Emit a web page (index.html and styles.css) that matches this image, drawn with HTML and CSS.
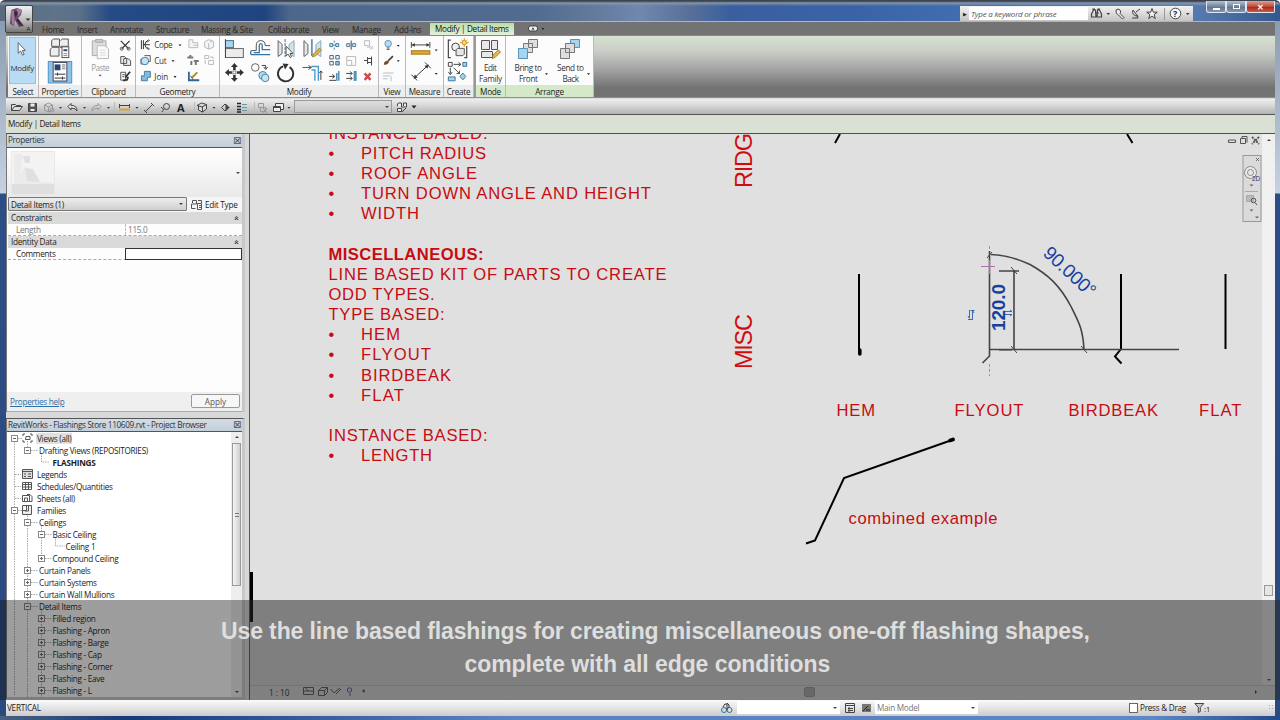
FILE: index.html
```
<!DOCTYPE html>
<html lang="en">
<head>
<meta charset="utf-8">
<title>Flashings Store</title>
<link rel="stylesheet" href="styles.css">
</head>
<body>
<div class="window">
  <header class="titlebar">
    <div class="search">
      <span class="search-arrow">▶</span>
      <span class="search-box">Type a keyword or phrase</span>
      <svg class="search-icons" width="104" height="14" viewBox="1089 7 104 14" fill="none" stroke="#444" stroke-width="1">
        <path d="M1092.500 17v-3l2-4h2l.5 7zM1098 17l.5-7h2l2 4v3zM1096 13h4M1094 10v-1h2M1099 10v-1h2" stroke-width="1.200"/>
        <path d="M1107.500 13h3.500l-1.800 2z" fill="#333" stroke="none"/>
        <path d="M1117 10q2-2 4 0q1.500 2 0 3.500l4 4-1.500 1.500-4-4q-3-.5-2.500-5z" fill="#eee"/>
        <path d="M1134 10q-2 5 5 6.500M1134 10l5 6.500M1137 12l4-3M1133 18h6l-1-3"/>
        <path d="M1153 8.500l1.300 3.700h4l-3.200 2.400 1.200 4-3.300-2.400-3.300 2.400 1.200-4-3.200-2.400h4z" fill="#f3f3f3"/>
        <path d="M1165.500 8v12" stroke="#999"/>
        <circle cx="1176.500" cy="13.500" r="5.300" fill="#f5f8ff"/>
        <text x="1174" y="17" font-size="9" font-weight="700" fill="#234" stroke="none">?</text>
        <path d="M1187 13h3.500l-1.800 2z" fill="#333" stroke="none"/>
      </svg>
    </div>
    <div class="winbtns">
      <span class="wb wb-min"><i></i></span><span class="wb wb-max"><i></i></span><span class="wb wb-close">✕</span>
    </div>
  </header>
  <div class="appbutton">
    <svg width="28" height="27" viewBox="0 0 28 27">
      <path d="M5 4l6-2 5 2-1 5-3 3 6 8-5 1-4-7-1 6-4-2z" fill="#6a4766"/>
      <path d="M5 4l3 1 1 15-3-2zM11 2l5 2-3 6-3-2z" fill="#9c7d9b"/><path d="M8 6l3-1 1 3-3 3zM12 13l5 7-3-1-4-5z" fill="#3d2340"/>
      <path d="M19.500 12.500h5L22 15z" fill="#333"/><text x="20.500" y="25" font-size="6" fill="#111">A</text>
    </svg>
  </div>
  <nav class="tabs">
    <span class="tab t-home">Home</span><span class="tab t-insert">Insert</span><span class="tab t-annotate">Annotate</span><span class="tab t-structure">Structure</span><span class="tab t-massing">Massing &amp; Site</span><span class="tab t-collab">Collaborate</span><span class="tab t-view">View</span><span class="tab t-manage">Manage</span><span class="tab t-addins">Add-Ins</span><span class="tab active">Modify | Detail Items</span>
    <svg class="tab-toggle" width="18" height="10" viewBox="0 0 18 10"><rect x=".5" y="2" width="9" height="5" rx="2" fill="#eee" stroke="#444"/><path d="M3.500 5.500h3L5 3.500zM13.500 4h3L15 6z" fill="#222"/></svg>
  </nav>

  <section class="ribbon">
    <div class="panel p-select">
      <svg viewBox="8 36 31 49" class="tools">
        <rect x="9.500" y="36.500" width="27" height="48" fill="#b9dbf3" stroke="#8dbbdc"/>
        <path d="M18.500 42v11l2.500-2.300 2 4.300 1.700-.8-1.900-4.100h3.200z" fill="#fff" stroke="#555" stroke-width=".9"/>
        <text x="10.500" y="71" textLength="24.500">Modify</text>
      </svg><label>Select</label>
    </div>
    <div class="panel p-props">
      <svg viewBox="39 36 43 49" class="tools" fill="none" stroke="#555">
        <path d="M52 40l2-1.500h6V46h-8zM61 40l2-1.500h6V46h-8M50.500 49l2-2h7v9h-9zM60 47h3" fill="#eee"/>
        <rect x="62.500" y="46.500" width="7" height="11" fill="#fff"/><path d="M64 49h4v2h-4z" fill="#346" stroke="none"/><path d="M64 53.500h4M64 55.500h4" stroke-width=".7"/>
        <rect x="48.500" y="61.500" width="24" height="22" fill="#8fc3ea" stroke="#4f8fc2"/>
        <rect x="53.500" y="62.500" width="14" height="19" fill="#fff" stroke="#445"/>
        <path d="M55 64.500h6v6h-6z" fill="#27466f" stroke="none"/><path d="M62.500 65h3.500M62.500 67h3.500M62.500 69h3.500" stroke-width=".8"/><path d="M55 74.500h11M55 78.500h11M58 73v3M63 77v3" stroke="#333"/>
      </svg><label>Properties</label>
    </div>
    <div class="panel p-clip">
      <svg viewBox="82 36 54 49" class="tools" fill="none" stroke="#555">
        <path d="M92.500 40.500h14v15h-14z" fill="#ddd" stroke="#aaa"/><path d="M96 39h7v3h-7z" fill="#ccc" stroke="#aaa"/><path d="M97.500 45.500h8l3.500 3v10h-11.500z" fill="#fafafa" stroke="#bbb"/><path d="M100 50h6M100 52.500h6M100 55h6" stroke="#ccc" stroke-width=".7"/>
        <text x="91.500" y="71" textLength="18.500" fill="#999" stroke="none">Paste</text><path d="M99 75h3l-1.500 1.800z" fill="#444" stroke="none"/>
        <path d="M121.500 40.500l8 8M130.500 40.500l-8 8" stroke="#333" stroke-width="1.200"/><circle cx="122.500" cy="48.500" r="1.500"/><circle cx="129.500" cy="48.500" r="1.500"/>
        <path d="M121.500 56.500h4l2 2v5h-6zM124.500 58.500h4l3 2v5h-7z" fill="#eee"/>
        <path d="M121.500 72.500h5v8h-5zM123 75h3M123 77h2" fill="#fff"/><path d="M126 78l5-6M124 81l4-1 1-3" stroke="#333" stroke-width="1.800"/>
      </svg><label>Clipboard</label>
    </div>
    <div class="panel p-geom">
      <svg viewBox="136 36 84 49" class="tools" fill="none" stroke="#666">
        <path d="M141.500 40v9M144 44.500h6M149 39.500q-4 2-4 5t4 5M143.500 40v9" stroke="#333"/><path d="M147 42l3-2M147 47l3 2"/>
        <text x="154.500" y="48" textLength="18.500" class="ink">Cope</text><path d="M179 44.300h3l-1.500 1.800z" class="car"/>
        <path d="M144.500 55.500h6v6h-3" fill="#eee"/><path d="M141 59h5v5h-5z" fill="#fff"/><circle cx="145" cy="61" r="3.800" fill="#c7e2f3" stroke="#4d7da0"/>
        <text x="154.500" y="64" textLength="12.500" class="ink">Cut</text><path d="M172 60.300h3l-1.500 1.800z" class="car"/>
        <path d="M144.500 71.500h6v6h-3v3.500h-6v-5h3z" fill="#83bce2" stroke="#4d7da0"/>
        <text x="154.500" y="80" textLength="14" class="ink">Join</text><path d="M174 76.300h3l-1.500 1.800z" class="car"/>
        <path d="M189.500 39.500h4v3h5v5h-9zM194 45h4M205.500 41.500l4-2 5 1.500v6l-5 2-4-2zM209.500 43v6M212 39.500v3" stroke="#bbb" fill="#f5f5f5"/>
        <path d="M188 57.500h6M194.500 61h5M191 57v-2M196.500 60v5M192 61v4" stroke="#777" stroke-width="2"/>
        <path d="M205.500 55.500h4v3h-4zM209.500 60.500h5v4h-5zM211 57h3v2M206 60v4" stroke="#bbb"/>
        <path d="M189.500 72v8.500H200" stroke="#2d6494" stroke-width="1.800"/><path d="M192.500 78l5.500-5.500" stroke="#b08a2c" stroke-width="2"/><path d="M191 76l3 4" stroke="#555"/>
      </svg><label>Geometry</label>
    </div>
    <div class="panel p-modify">
      <svg viewBox="220 36 159 49" class="tools" fill="none" stroke="#666">
        <rect x="225.500" y="40.500" width="8" height="7" fill="#a9d4ee" stroke="#39739c"/><rect x="225.500" y="48.500" width="18" height="9" fill="#ececec"/><path d="M225.500 39v19" stroke="#444"/>
        <path d="M251.500 50.500h5v-5q0-5 4.500-5t4.500 5h5" stroke="#555"/><path d="M251.500 50.500q-1.500 2 0 4h19M254 52.500h5.500v-7q0-2 1.500-2t1.500 2v4h8" stroke="#37749f" stroke-width="1.300"/>
        <path d="M278.500 40.500l4 4v9l-4 3z" fill="#e5e5e5"/><path d="M285.500 39v18" stroke="#2b6ba0" stroke-dasharray="3 1"/><path d="M294.500 40.500l-5 4v9l5 3z" fill="#cfe6e8" stroke="#8ab"/><path d="M286.500 46v10l2-2 2 3.500 1.500-.7-1.600-3.400h3z" fill="#fff" stroke="#444" stroke-width=".9"/>
        <path d="M304.500 40.500l4 4v9l-4 3z" fill="#e5e5e5"/><path d="M312.500 39v17" stroke="#2b6ba0" stroke-width="1.300"/><path d="M321.500 40.500l-5 4v9l5 3z" fill="#cfe6e8" stroke="#8ab"/><path d="M313 57l1-3 6-6 2 2-6 6z" fill="#e5b53a" stroke="#8b6a22" stroke-width=".7"/>
        <path d="M234.500 63l3.500 4h-2.200v3h-2.600v-3H231zM234.500 82l3.500-4h-2.200v-3h-2.600v3H231zM225 72.500l4-3.500v2.200h3v2.600h-3V76zM244 72.500l-4-3.500v2.200h-3v2.600h3V76z" fill="#333" stroke="none"/><rect x="233" y="71" width="3" height="3" fill="#fff" stroke="#555" stroke-width=".7"/>
        <circle cx="255.500" cy="67.500" r="3.800" fill="#fafafa"/><path d="M262 65.500h4v3M264 67l2 2.500 2-2.500" stroke="#444"/><circle cx="263" cy="75.500" r="4" fill="#b5d9ed" stroke="#4f85a8"/><circle cx="265.500" cy="78" r="3.800" fill="#c5e3f2" stroke="#4f85a8"/>
        <path d="M283.500 66.500a7.700 7.700 0 1 0 6.500.7" stroke="#333" stroke-width="1.900"/><path d="M283 63.500l6 .5-3.500 5.500z" fill="#333" stroke="none"/>
        <path d="M303 67.500h9M309 65.500l3 2-3 2" stroke="#555"/><path d="M312 66.500h7V81M312 70h3.500v11" stroke="#4a9bd0" stroke-width="1.400"/><path d="M321.500 71v9M320 73l1.500-2 1.500 2" stroke="#444"/>
        <path d="M330.500 43.500h3v3h-3zM336.500 43.500h3v3h-3zM333.500 45h3" stroke="#3f7ca6" fill="#cfe6f4"/><path d="M335 40.500v2M335 47.500v2" stroke="#3f7ca6"/>
        <path d="M347.500 43.500h3v3h-3zM353.500 43.500h3v3h-3z" fill="#cfe6f4" stroke="#55809c"/><path d="M352 40.500v9" stroke="#444"/>
        <path d="M365.500 40.500h5v5h-5zM368 47h3M371 46l3 3.500M374 46l-3 3.500" stroke="#bbb"/>
        <path d="M330.500 55.500h3.500v3.500h-3.500zM336.500 55.500h3.500v3.500h-3.500zM330.500 61.500h3.500v3.500h-3.500z" fill="#fafafa" stroke="#406c8e"/><path d="M336.500 61.500h3.500v3.500h-3.500z" fill="#9cccea" stroke="#406c8e"/>
        <path d="M347.500 56.500h9v9h-9zM347.500 60.500h5v5" stroke="#bbb"/>
        <path d="M365 60.500h3M368.500 57v7M368.500 58.500h4v4h-4M372.500 56.500v9" stroke="#444"/>
        <path d="M330 76.500h5M333 74.500l2.500 2-2.500 2M330 80.500h7" stroke="#444"/><path d="M339.500 71v10M337.500 73v8" stroke="#5591b8" stroke-width="1.600"/>
        <path d="M347 73.500h6M347 78.500h6M351 71.500l2 2-2 2M351 76.500l2 2-2 2" stroke="#444"/><path d="M356 71v10" stroke="#5591b8" stroke-width="3"/>
        <path d="M365.500 73.500l6 6.500M371.500 73.500l-6 6.500" stroke="#d2484b" stroke-width="2.500"/>
      </svg><label>Modify</label>
    </div>
    <div class="panel p-view">
      <svg viewBox="379 36 27 49" class="tools" fill="none" stroke="#555">
        <circle cx="388.500" cy="43" r="3.400" fill="#b5dcf4" stroke="#6a94b5"/><path d="M387 47.500h3M387 49h3" stroke="#555"/><path d="M397.500 44.300h3l-1.500 1.800z" class="car"/>
        <path d="M393.500 56l-5 5" stroke="#444" stroke-width="1.800"/><path d="M384 65q0-4 4-4.500l1.500 1.500q-1.500 3-5.500 3z" fill="#7b4b24" stroke="none"/><path d="M397.500 60.300h3l-1.500 1.800z" class="car"/>
        <path d="M383 73.500h11M383 76.500h8M383 79.500h5M391.500 77v5" stroke="#bbb"/>
      </svg><label>View</label>
    </div>
    <div class="panel p-measure">
      <svg viewBox="406 36 38 49" class="tools" fill="none" stroke="#333">
        <path d="M411.500 41.500v6M430.500 41.500v6M412 44.500h18" stroke="#444"/><path d="M412 44.500l3-2v4zM430 44.500l-3-2v4z" fill="#333" stroke="none"/><rect x="411.500" y="50.500" width="19" height="3.500" fill="#e5a92a" stroke="#9d7520"/><path d="M435.500 49.300h3l-1.500 1.800z" class="car"/>
        <path d="M414 79l15-14M411.500 75l6 6M425.500 62.500l6 6"/><path d="M414 79l1-4 3 3zM429 65l-4 1 3 3z" fill="#333" stroke="none"/><path d="M435.500 73.300h3l-1.500 1.800z" class="car"/>
      </svg><label>Measure</label>
    </div>
    <div class="panel p-create">
      <svg viewBox="444 36 30 49" class="tools" fill="none" stroke="#444">
        <path d="M451 39.500h-2.500v18h2.500M465 57.500h2.500v-12" stroke-width="1.200"/><circle cx="456" cy="46.500" r="4" fill="#eee"/><path d="M456.500 49.500l1.500-1.500h7v6l-1.500 1.500h-7z" fill="#e5e5e5" stroke="#555"/><circle cx="465" cy="42" r="2.300" fill="#ffd768" stroke="#d78b1b"/><path d="M465 37.500v2M465 44.500v2M460.500 42h2M467.500 42h2M462 39l1 1M468 39l-1 1" stroke="#d78b1b"/>
        <path d="M448.500 62.500h4v4h-4z" fill="#fafafa"/><path d="M463.500 62.500h4v4h-4zM448.500 77.500h7v4h-7zM463.500 73.500l3 3.500-3 3.500-3-3.500z" fill="#a6d3ee" stroke="#39739c"/><path d="M454 64.500h7M459 62.500l2.500 2-2.500 2M450.500 68v7M448.500 72.500l2 2.500 2-2.500M454 68l6 6M460 71v3h-3"/>
      </svg><label>Create</label>
    </div>
    <div class="panel p-mode">
      <svg viewBox="476 36 29 49" class="tools" fill="none" stroke="#555">
        <path d="M481.500 40.500h8v9h-8zM481.500 51.500h11v6h-11zM491.500 40.500h6v9h-6z" fill="#e8e8e8"/><path d="M492 58.500l1-3.500 5.500-5 2 2-5.500 5.500z" fill="#e8bd45" stroke="#846822" stroke-width=".8"/>
        <text x="484" y="71" textLength="13" class="ink">Edit</text><text x="479" y="81.500" textLength="23" class="ink">Family</text>
      </svg><label class="green">Mode</label>
    </div>
    <div class="panel p-arrange">
      <svg viewBox="506 36 87 49" class="tools" fill="none" stroke="#777">
        <path d="M528.500 39.500h9v8h-9zM523.500 43.500h9v9h-9z" fill="#dedede"/><path d="M518.500 48.500h9v10h-9z" fill="#a5d5ef" stroke="#5793b8"/>
        <text x="514.500" y="71" textLength="27.500" class="ink">Bring to</text><text x="519" y="81.500" textLength="19" class="ink">Front</text><path d="M545 73.300h3l-1.500 1.800z" class="car"/>
        <path d="M570.500 39.500h9v8h-9z" fill="#a5d5ef" stroke="#5793b8"/><path d="M565.500 43.500h9v9h-9zM560.500 48.500h9v10h-9z" fill="#dedede"/>
        <text x="557" y="71" textLength="27" class="ink">Send to</text><text x="562.500" y="81.500" textLength="16.500" class="ink">Back</text><path d="M587 73.300h3l-1.500 1.800z" class="car"/>
      </svg><label class="green">Arrange</label>
    </div>
  </section>

  <div class="qat">
    <svg width="290" height="16" viewBox="6 98 290 16" fill="none" stroke="#444">
      <path d="M11.500 109.500v-6h4l1 1h4v1M11.500 109.500l3-4h8l-3 4z" fill="#ddd"/>
      <path d="M28.500 102.500h8v8h-8z" fill="#555"/><path d="M30.500 102.500h4v3h-4zM30.500 108h4v2h-4z" fill="#eee" stroke="none"/>
      <path d="M44.500 104l4-2 4 2v5l-4 2-4-2zM44.500 104l4 2 4-2M48.500 106v5" stroke="#999"/><circle cx="52" cy="109" r="2" stroke="#999"/>
      <path d="M68 105.500l3-3v2q6-.5 6 5.500-1-3-6-3v2z" fill="#e8e8e8"/><path d="M101 105.500l-3-3v2q-6-.5-6 5.500 1-3 6-3v2z" stroke="#999"/>
      <path d="M119.500 103v4M129.500 103v4M120 104.500h9" /><path d="M119 107.500h11v2h-11z" fill="#d9a42b" stroke="none"/>
      <path d="M145 111l8-8M144 109l3 3M151 102l3 3"/><circle cx="166.500" cy="105.500" r="3"/><path d="M164 108l-2 3M161 106l2 2"/>
      <text x="177" y="111" font-size="11" font-weight="700" fill="#222" stroke="none">A</text>
      <path d="M197 104.500l4.500-2.500 5 1.500v4.500l-4 3-4-2v-4.500M197 104.500l5 1.500 4.500-2.500M202.500 106v5" fill="#ddd"/><path d="M221.500 106.500l3.500-3.500 3.500 3.500-3.500 3.500z"/><path d="M226 103.500l3 3-3 3z" fill="#444"/>
      <path d="M237 102.500h4M237 105.500h4M237 108.500h4M237 111h4" stroke="#222" stroke-width="1.500"/><path d="M242 103.500h5M242 106.500h5M242 109.500h5" stroke="#69a"/>
      <path d="M258.500 102.500h5v4h-5zM260.500 106.500h5v4h-5zM263 107l4 5M267 107l-4 5" stroke="#999"/>
      <path d="M275.500 102.500h8v6h-8z" fill="#eee"/><path d="M273.500 105.500h7v5h-7zM273.500 106.500h7" fill="#eee"/>
      <path d="M59 106h3l-1.500 1.800zM83 106h3l-1.500 1.800zM107 106h3l-1.500 1.800zM135.500 106h3l-1.500 1.800zM212.500 106h3l-1.500 1.800zM287.500 106h3l-1.500 1.800z" fill="#333" stroke="none"/>
      <path d="M114.500 101v11M194.500 101v11M254.500 101v11" stroke="#bbb"/>
    </svg>
    <span class="qat-combo"><b class="down"></b></span>
    <svg width="30" height="16" viewBox="394 98 30 16" fill="none" stroke="#444"><path d="M397.500 105v-2l1-1h3v4h5v-4h-3v3M397.500 107.500h4v3h-4zM402 111l4-4" fill="#eee"/><path d="M411.500 104.500h5l-2.500 3z" fill="#222" stroke="none"/></svg>
  </div>
  <div class="optbar">Modify | Detail Items</div>

  <main class="work">
    <aside class="side">
      <section class="props">
        <h2><span>Properties</span><i class="x">⊠</i></h2>
        <div class="preview"><svg width="44" height="44" viewBox="0 0 44 44"><rect x=".5" y=".5" width="43" height="43" fill="#f3f3f3" stroke="#e9e9e9"/><path d="M3 3h9l-3 20 6-8 10 16h18v12H1V33h2z" fill="#ebebeb"/><path d="M1 33h42v10H1z" fill="#dfdfdf"/><path d="M12 5h7v7h-5zM14 17l8 1 7 13-13-1z" fill="#e0e0e0"/></svg><b class="down"></b></div>
        <div class="typerow"><span class="select">Detail Items (1)<b class="down"></b></span>
          <svg width="12" height="11" viewBox="0 0 12 11" fill="none" stroke="#555"><path d="M1.500 4V1.500h4V5h-5v4.500h4M7 1.500h3.500V4"/><path d="M6.500 4.500h4v6h-4zM8 6.500h2M8 8.500h2" fill="#fff"/></svg>
          <span class="edit">Edit Type</span></div>
        <div class="grp"><span>Constraints</span><i>«</i></div>
        <div class="prow dim"><span>Length</span><em>115.0</em></div>
        <div class="grp"><span>Identity Data</span><i>«</i></div>
        <div class="prow"><span>Comments</span><em class="boxed"></em></div>
        <div class="pfoot"><a>Properties help</a><button>Apply</button></div>
      </section>
      <section class="browser">
        <h2><span>RevitWorks - Flashings Store 110609.rvt - Project Browser</span><i class="x">⊠</i></h2>
        <div class="treewrap">
          <div class="tree">
            <svg class="guides" width="60" height="265" viewBox="8 433 60 265" fill="none" stroke="#aaa" stroke-dasharray="1.500 1"><path d="M14.500 442v255M27.500 514v184M27.500 442v7M41.500 454v9h8M41.500 526v32M55.500 538v9h9M41.500 610v88M18 439.500h4M31 451.500h7M15 475.500h6M15 487.500h6M15 499.500h6M18 511.500h4M31 523.500h7M45 535.500h7M45 559.500h7M31 571.500h7M31 583.500h7M31 595.500h7M31 607.500h7M45 619.500h7M45 631.500h7M45 643.500h7M45 655.500h7M45 667.500h7M45 679.500h7M45 691.500h7"/></svg>
            <div class="row l1"><u class="minus"></u><svg width="11" height="10" viewBox="0 0 11 10" fill="none" stroke="#555"><path d="M1 3V1h2M8 1h2v2M10 7v2H8M3 9H1V7M4 3.500h4v3H3.500z"/></svg><span class="sel">Views (all)</span></div>
            <div class="row l2"><u class="minus"></u><span>Drafting Views (REPOSITORIES)</span></div>
            <div class="row leaf3"><span class="bold">FLASHINGS</span></div>
            <div class="row l1"><u class="none"></u><svg width="11" height="10" viewBox="0 0 11 10" fill="#ddd" stroke="#555"><path d="M.5.500h10v9H.5zM.5 2.500h10M2 5h2M6 5h3M2 7.500h2M6 7.500h3"/></svg><span>Legends</span></div>
            <div class="row l1"><u class="none"></u><svg width="11" height="10" viewBox="0 0 11 10" fill="#fff" stroke="#555"><path d="M.5 1.500h9v7H.5zM.5 3.500h9M.5 6h9M3.500 1.500v7M6.500 1.500v7"/></svg><span>Schedules/Quantities</span></div>
            <div class="row l1"><u class="none"></u><svg width="11" height="10" viewBox="0 0 11 10" fill="#fff" stroke="#555"><path d="M.5 2.500h7v6H.5zM2.500 8V5h3v3M5 1.500h3l2 2v5H7.500"/></svg><span>Sheets (all)</span></div>
            <div class="row l1"><u class="minus"></u><svg width="11" height="10" viewBox="0 0 11 10" fill="#eee" stroke="#555"><path d="M.5.500h9v9H.5zM.5 5.500h4v-5M6.500 1v5H3"/></svg><span>Families</span></div>
            <div class="row l2"><u class="minus"></u><span>Ceilings</span></div>
            <div class="row l3"><u class="minus"></u><span>Basic Ceiling</span></div>
            <div class="row leaf4"><span>Ceiling 1</span></div>
            <div class="row l3"><u class="plus"></u><span>Compound Ceiling</span></div>
            <div class="row l2"><u class="plus"></u><span>Curtain Panels</span></div>
            <div class="row l2"><u class="plus"></u><span>Curtain Systems</span></div>
            <div class="row l2"><u class="plus"></u><span>Curtain Wall Mullions</span></div>
            <div class="row l2"><u class="minus"></u><span>Detail Items</span></div>
            <div class="row l3"><u class="plus"></u><span>Filled region</span></div>
            <div class="row l3"><u class="plus"></u><span>Flashing - Apron</span></div>
            <div class="row l3"><u class="plus"></u><span>Flashing - Barge</span></div>
            <div class="row l3"><u class="plus"></u><span>Flashing - Cap</span></div>
            <div class="row l3"><u class="plus"></u><span>Flashing - Corner</span></div>
            <div class="row l3"><u class="plus"></u><span>Flashing - Eave</span></div>
            <div class="row l3"><u class="plus"></u><span>Flashing - L</span></div>
          </div>
          <div class="vscroll"><b class="up"></b><div class="thumb"><i></i></div><b class="down"></b></div>
        </div>
      </section>
    </aside>

    <section class="canvas">
      <svg class="drawing" width="1012" height="551" viewBox="250 134 1012 551">
        <g class="note">
          <text x="328.500" y="139" textLength="159">INSTANCE BASED:</text>
          <text x="328.500" y="158.500">•</text><text x="361" y="158.500" textLength="125">PITCH RADIUS</text>
          <text x="328.500" y="178.500">•</text><text x="361" y="178.500" textLength="116">ROOF ANGLE</text>
          <text x="328.500" y="198.500">•</text><text x="361" y="198.500" textLength="290">TURN DOWN ANGLE AND HEIGHT</text>
          <text x="328.500" y="219">•</text><text x="361" y="219" textLength="58">WIDTH</text>
          <text x="328.500" y="259.500" textLength="155" font-weight="700">MISCELLANEOUS:</text>
          <text x="328.500" y="279.500" textLength="338">LINE BASED KIT OF PARTS TO CREATE</text>
          <text x="328.500" y="299.500" textLength="106">ODD TYPES.</text>
          <text x="328.500" y="319.500" textLength="116">TYPE BASED:</text>
          <text x="328.500" y="340">•</text><text x="361" y="340" textLength="39">HEM</text>
          <text x="328.500" y="360">•</text><text x="361" y="360" textLength="70">FLYOUT</text>
          <text x="328.500" y="380.500">•</text><text x="361" y="380.500" textLength="90">BIRDBEAK</text>
          <text x="328.500" y="400.500">•</text><text x="361" y="400.500" textLength="43">FLAT</text>
          <text x="328.500" y="440.500" textLength="159">INSTANCE BASED:</text>
          <text x="328.500" y="461">•</text><text x="361" y="461" textLength="71">LENGTH</text>
          <text x="836.500" y="416" textLength="38.500">HEM</text>
          <text x="954.500" y="416" textLength="69">FLYOUT</text>
          <text x="1068.500" y="416" textLength="89.500">BIRDBEAK</text>
          <text x="1199" y="416" textLength="42.500">FLAT</text>
          <text x="848.500" y="524" textLength="149">combined example</text>
          <text class="big" transform="translate(751.500 188) rotate(-90)" textLength="55">RIDG</text>
          <text class="big" transform="translate(751.500 369) rotate(-90)" textLength="55">MISC</text>
        </g>
        <g fill="none" stroke="#000" stroke-width="2">
          <path d="M840 134l-5 9M1127 134l5.500 9M859 274v76M1121 274v75l-6 7.500 6.500 7M1225.500 274v75M806 543.500l9-3 29-62.500 108-38"/>
          <path d="M859.800 350v4" stroke-width="3.600" stroke-linecap="round"/><path d="M950 440.500l3-1" stroke-width="3.800" stroke-linecap="round"/><path d="M251.500 572v50" stroke-width="3"/>
        </g>
        <g fill="none" stroke="#444" stroke-width="1.600">
          <path d="M989.500 251v105l-7 7M989.500 349.500H1179M1014 270v79M999 271h20M991 254.500c14 .5 26 4 39 10 18 10 30 21 41 42 8 16 12 23 13 43"/>
          <path d="M987 258l5-6M1011 267l6 7M1011 346l6 7M1081 346l6 7M999 350h13" stroke-width="1"/>
          <path d="M989.500 246v4M989.500 364v12" stroke="#999" stroke-width="1" stroke-dasharray="3 2"/><path d="M981 266.500h14M989.500 260v14" stroke="#b06cb0" stroke-width="1"/>
          <path d="M969.500 310v8M968 316l1.500 2.500M972.500 320v-9M974 313l-1.500-2.500M968 319.500h4M970.500 310.500h4M1004 311.500h8l-2-1.500M1005 314.500h7l-2 1.500" stroke="#2a5eb0" stroke-width=".9"/>
        </g>
        <text class="dim-b" transform="translate(1005 331) rotate(-90)" textLength="47">120.0</text>
        <text class="dim-a" transform="translate(1042 254.500) rotate(43)" textLength="64">90.000°</text>
        <g fill="none" stroke="#555">
          <path d="M1228.500 140h7v2.500h-7z"/><path d="M1240.500 138.500h5v5h-5zM1242 138v-1.500h5v6"/><path d="M1252 137l7 7M1259 137l-7 7" stroke-width="2" stroke-dasharray="2 1"/>
          <rect x="1243" y="155.500" width="18" height="66" fill="#dadada" stroke="#999"/><path d="M1256 158l3 3M1259 158l-3 3" stroke-width=".8"/>
          <circle cx="1250.500" cy="172.500" r="6" fill="#e8e8e8" stroke="#888"/><circle cx="1250.500" cy="172.500" r="3" stroke="#888"/><path d="M1245 191.500h13" stroke="#aaa"/>
          <path d="M1246.500 195.500h7v6h-7z" fill="#b9bbb4" stroke="#aaa"/><circle cx="1253.500" cy="200.500" r="2.300"/><path d="M1255 202.500l2 2.500"/>
          <path d="M1249.500 184.500h4l-2 2zM1249.500 209.500h4l-2 2zM1255 216.500h4l-2 2z" fill="#666" stroke="none"/>
        </g>
        <text x="1252" y="181" font-size="6.500" fill="#336">2D</text>
      </svg>
      <div class="cscroll"><b class="up"></b><div class="cthumb"></div><b class="down"></b></div>
      <div class="viewbar"><span>1 : 10</span>
        <svg width="70" height="12" viewBox="300 686 70 12" fill="none" stroke="#555"><path d="M303.500 687.500h10v7h-10zM304 691h9M306 688l2 3"/><path d="M318.500 690.500h6v5h-6zM318.500 690.500l3-3h6v5l-3 3M324.500 690.500l3-3"/><path d="M331 689q3 6 5 2l4-3M336 694l5-5"/><circle cx="349.500" cy="690" r="2.200" stroke="#3d5ea5"/><path d="M350 693v3" stroke="#3d5ea5"/><path d="M364.500 689l-2.500 2 2.500 2z" fill="#333" stroke="none"/></svg>
        <i class="hthumb"></i><b class="right"></b>
      </div>
    </section>
    <div class="caption"><p class="c1">Use the line based flashings for creating miscellaneous one-off flashing shapes,</p><p class="c2">complete with all edge conditions</p></div>
  </main>

  <footer class="status">
    <span class="st-msg">VERTICAL</span>
    <svg width="14" height="12" viewBox="0 0 14 12" fill="none" stroke="#35718f"><circle cx="4" cy="8" r="2.500" fill="#bfe6f5"/><circle cx="9.500" cy="8" r="2.500"/><path d="M3 5l2-3h2v6M9 6V3l-2-2" stroke="#333"/></svg>
    <span class="st-combo"><b class="down"></b></span>
    <svg width="28" height="12" viewBox="0 0 28 12" fill="none" stroke="#444"><path d="M1.500 1.500h9v9h-9zM1.500 3.500h9M4 6.500h5M4 8.500h5M5 5v5"/><path d="M18 2h9v8h-9z" fill="#777" stroke="none"/><path d="M19 9l5-5M22 8h4" stroke="#222"/></svg>
    <span class="st-combo st-model">Main Model<b class="down"></b></span>
    <span class="st-check"></span><span class="st-pd">Press &amp; Drag</span>
    <svg width="18" height="12" viewBox="0 0 18 12" fill="none" stroke="#444"><path d="M.8 1.500h9l-3.500 4v4l-2 1v-5z" fill="#ccc"/><text x="10" y="10" font-size="7.500" fill="#222" stroke="none">:1</text></svg>
    <i class="grip"></i>
  </footer>
</div>
</body>
</html>
```
FILE: styles.css
```
* { box-sizing: border-box; }
body { margin: 0; width: 1280px; height: 720px; overflow: hidden; font-family: "Open Sans", "Noto Sans", sans-serif; font-size: 8.2px; letter-spacing: -.27px; color: #222; }
h2, p { margin: 0; font-weight: 400; }
i, em, u { font-style: normal; text-decoration: none; }
svg { display: block; flex: none; letter-spacing: 0; }
.window { position: relative; display: flex; flex-direction: column; width: 1280px; height: 720px; padding: 0 5px 4px 6px; border-top: 1px solid #3b4450; border-radius: 5px 5px 0 0;
  background:
    linear-gradient(#3a3f46, #8397ac 2px, transparent 5px) 0 0 / 100% 21px no-repeat,
    linear-gradient(90deg, #5a6b80, #5f7389 55px, #5a7089 80px, #264a84 110px, #20447f 265px, #4d678b 290px, #526c90 540px, #62799a 590px, #7088ae 640px, #587098 690px, #3a5f9f 730px, #3a63a7 850px, #4670b4 1000px, #5579af 1200px, #34578f) 0 0 / 100% 20px no-repeat,
    linear-gradient(90deg, #4a6080, #16397a 10%, #5b83c4 40%, #5b83c4 70%, #5c88c8 90%, #24498a) 0 100% / 100% 4px no-repeat,
    linear-gradient(#8496ac, #c2cede 180px, #c6d2e2 192px, #2c4e86 193px, #2b4a80); }
.titlebar { height: 20px; flex: none; display: flex; justify-content: flex-end; }
.search { display: flex; align-items: center; height: 15px; margin: 5px 13px 0 0; width: 233px; background: linear-gradient(#f2f2f2, #c4c4c4); }
.search-arrow { width: 9px; font-size: 5px; text-align: center; }
.search-box { width: 119px; height: 13px; line-height: 13px; padding-left: 2px; background: #fff; font-style: italic; color: #555; font-size: 8px; letter-spacing: -.22px; white-space: nowrap; }
.winbtns { display: flex; width: 69px; height: 12px; }
.wb { display: flex; align-items: center; justify-content: center; width: 20px; background: linear-gradient(#b5c2d2, #71849c 50%, #5b718d 51%, #8499b2); border: 1px solid #e0e6ee; border-top: 0; border-radius: 0 0 2px 3px; color: #fff; font-size: 8px; font-weight: 700; }
.wb-min i { width: 7px; height: 2px; background: #fff; margin-top: 4px; }
.wb-max i { width: 7px; height: 5px; border: 1.500px solid #fff; }
.wb-close { width: 29px; background: linear-gradient(#dba196, #c04a38 50%, #a52617 51%, #c95a41); }
.appbutton { position: absolute; left: 5px; top: 4px; width: 28px; height: 28px; border: 1px solid #444; border-radius: 2px; background: linear-gradient(#f0f0f0, #bdbdbd 55%, #777); z-index: 2; overflow: hidden; }
.tabs { height: 15px; flex: none; display: flex; align-items: stretch; padding-left: 36px; background: #737373; border-top: 1px solid #a6b6cb; line-height: 15px; color: #262626; white-space: nowrap; border-bottom: 1px solid #6f9e57; }
.tab { flex: none; }
.t-home { width: 35px; } .t-insert { width: 33px; } .t-annotate { width: 46px; } .t-structure { width: 45px; } .t-massing { width: 67px; } .t-collab { width: 54px; } .t-view { width: 30px; } .t-manage { width: 42px; } .t-addins { width: 36px; }
.active { width: 84px; padding-left: 5px; margin-top: 1px; line-height: 12px; background: linear-gradient(#b9dfa5, #e4f1dd); color: #111; letter-spacing: -.33px; }
.tab-toggle { margin: 2px 0 0 14px; }
.ribbon { height: 62px; flex: none; display: flex; padding: 0 0 0 2px; background: linear-gradient(#d6e2cf, #c9cdc7 25%, #a3a3a3 55%, #737373 85%, #737373); border-bottom: 1px solid #7c9f6d; }
.panel { display: flex; flex-direction: column; height: 61px; background: #fcfcfc; border-right: 1px solid #b9b9b9; flex: none; }
.tools { width: 100%; height: 49px; }
.tools text { font-size: 8.200px; fill: #333; stroke: none; }
.tools text[fill] { fill: #999; }
.car { fill: #222; stroke: none; }
.panel label { height: 12px; line-height: 13px; text-align: center; background: #ededed; }
.panel label.green { background: #d4e9c8; }
.p-select { width: 31px; } .p-props { width: 43px; } .p-clip { width: 54px; } .p-geom { width: 84px; } .p-modify { width: 159px; } .p-view { width: 27px; } .p-measure { width: 38px; } .p-create { width: 30px; } .p-mode { width: 32px; border-left: 2px solid #999; } .p-arrange { width: 88px; }
.qat { display: flex; height: 17px; flex: none; background: linear-gradient(#eee, #dcdcdc 35%, #b4b4b4); border-bottom: 1px solid #555; border-top: 1px solid #ddd; }
.qat-combo { width: 98px; height: 13px; border: 1px solid #999; background: linear-gradient(#dedede, #c6c6c6); margin: 1px 0 0 -2px; display: flex; justify-content: flex-end; align-items: center; padding-right: 2px; }
.qat-combo + svg { margin-left: 2px; }
.down, .up, .right { flex: none; width: 0; height: 0; border: 2px solid transparent; }
.down { border-top: 2.500px solid #444; border-bottom: 0; }
.up { border-bottom: 2.500px solid #444; border-top: 0; }
.right { border-left: 2.500px solid #333; border-right: 0; }
.optbar { height: 19px; flex: none; line-height: 18px; padding-left: 2px; background: #dae0d4; border-bottom: 1px solid #4a5548; letter-spacing: -.38px; }
.work { position: relative; height: 566px; flex: none; display: flex; background: #d6d8d9; }
.side { width: 239px; flex: none; display: flex; flex-direction: column; }
.side h2 { display: flex; justify-content: space-between; align-items: center; height: 14px; padding: 0 1px 1px 1px; font-size: 8.200px; line-height: 12px; background: linear-gradient(#d5dce3, #c3cfd9); color: #333; border-bottom: 1px solid #555; letter-spacing: -.33px; }
.x { font-size: 10px; line-height: 9px; font-family: "DejaVu Sans", sans-serif; color: #555; }
.props { height: 278px; display: flex; flex-direction: column; background: #fdfdfd; border: solid #c6c8ca; border-width: 0 3px 0 0; border-left: 1px solid #777; }
.preview { height: 49px; display: flex; align-items: center; justify-content: space-between; padding: 0 2px 0 4px; background: linear-gradient(#fff, #f0f0f0 70%, #e9e9e9); }
.typerow { display: flex; align-items: center; height: 15px; padding: 0 0 1px 1px; background: #f6f6f6; }
.select { width: 179px; height: 14px; border: 1px solid #777; border-radius: 1px; background: linear-gradient(#eee, #cfcfcf); display: flex; align-items: center; justify-content: space-between; padding: 0 3px 0 2px; }
.typerow svg { margin: 0 2px 0 4px; }
.grp { height: 12px; line-height: 12px; display: flex; justify-content: space-between; padding: 0 3px 0 3px; background: #dadada; margin-left: 1px; }
.grp i { transform: rotate(90deg); font-size: 9px; }
.prow { height: 12px; line-height: 12px; display: flex; border-bottom: 1px dashed #aaa; padding-left: 8px; margin-left: 1px; }
.prow span { width: 109px; }
.prow em { flex: 1; border-left: 1px dashed #bbb; padding-left: 2px; }
.prow em.boxed { border: 1px solid #333; margin-bottom: -1px; }
.dim { color: #777; }
.pfoot { margin-top: auto; height: 20px; display: flex; justify-content: space-between; align-items: center; padding: 0 2px 1px 3px; background: #efefef; border-bottom: 1px solid #aaa; }
.pfoot a { color: #2a70a8; text-decoration: underline; }
.pfoot button { width: 49px; height: 14px; padding: 0; font: inherit; letter-spacing: 0; color: #555; border: 1px solid #999; background: #f7f7f7; border-radius: 2px; }
.browser { margin-top: 6px; height: 282px; display: flex; flex-direction: column; border: solid #c6c8ca; border-width: 0 3px 3px 0; border-left: 1px solid #777; border-top: 1px solid #555; }
.browser h2 { height: 13px; }
.treewrap { flex: 1; display: flex; background: #fff; overflow: hidden; }
.tree { position: relative; flex: 1; padding: 0 0 0 1px; }
.guides { position: absolute; left: 1px; top: 0; }
.row { position: relative; height: 12px; display: flex; align-items: center; white-space: nowrap; line-height: 11px; }
.row u { width: 7px; height: 7px; border: 1px solid #888; background: linear-gradient(#666, #666) center / 3px 1px no-repeat, #fff; }
.row u.plus { background: linear-gradient(#666, #666) center / 3px 1px no-repeat, linear-gradient(#666, #666) center / 1px 3px no-repeat, #fff; }
.row u.none { border: 0; background: none; }
.l1 { padding-left: 3px; } .l1 svg { margin: 0 3px 0 4px; } .l1 span { padding: 0 1px; }
.l2 { padding-left: 16px; } .l2 span { margin-left: 8px; } .l3 { padding-left: 30px; } .l3 span { margin-left: 7.500px; }
.leaf3 { padding-left: 44.500px; } .leaf4 { padding-left: 57.500px; }
.sel { background: #e0e0e0; } .bold { font-weight: 700; }
.vscroll { width: 11px; background: #eee; display: flex; flex-direction: column; align-items: center; padding: 4px 0; }
.thumb { margin-top: 5px; width: 9px; height: 143px; border: 1px solid #999; background: linear-gradient(90deg, #f6f6f6, #cfcfcf); display: flex; align-items: center; justify-content: center; }
.thumb i { width: 4px; height: 4px; border: solid #777; border-width: 1px 0; }
.vscroll .down { margin-top: auto; }
.canvas { margin-left: 4px; width: 1026px; flex: none; border-left: 1px solid #555; display: grid; grid-template-columns: 1012px 13px; grid-template-rows: 551px 15px; background: #e0e0e0; }
.drawing { overflow: hidden; font-family: "Liberation Sans", Arial, sans-serif; }
.note text { font-size: 16.600px; fill: #c60c10; }
.note .big { font-size: 23.500px; fill: #d00c12; }
.dim-b { font-size: 19px; font-weight: 700; fill: #1640a0; }
.dim-a { font-size: 19px; fill: #1640a0; }
.cscroll { background: #f0f0f0; display: flex; flex-direction: column; align-items: center; padding: 5px 0 4px; }
.cthumb { margin: 444px 0 auto; width: 9px; height: 11px; border: 1px solid #999; background: #e6e6e6; }
.viewbar { grid-column: 1 / 3; display: flex; align-items: center; background: #e3e3e3; padding: 0 0 2px 19px; border-top: 1px solid #c9c9c9; }
.viewbar span { width: 31px; letter-spacing: 0; }
.hthumb { margin-left: 434px; width: 11px; height: 10px; background: #b0b0b0; border: 1px solid #999; border-radius: 2px; }
.viewbar .right { margin-left: 440px; }
.caption { position: absolute; left: -6px; top: 466px; width: 1280px; height: 100px; padding-top: 14px; background: linear-gradient(90deg, rgba(12,12,12,.4) 249px, rgba(38,38,38,.52) 249px); font: 23px "Liberation Sans", Arial, sans-serif; color: #dedede; white-space: nowrap; }
.caption p { height: 33px; line-height: 34px; font-weight: 700; }
.c1 { padding-left: 221px; letter-spacing: -.115px; } .c2 { padding-left: 464.500px; letter-spacing: -.07px; }
.status { height: 16px; flex: none; display: flex; align-items: center; background: linear-gradient(#fafafa, #e0e0e0 60%, #cbcbcb); padding: 0 0 1px 1px; }
.st-msg { width: 713px; }
.st-combo { width: 103px; height: 13px; margin-left: 3px; background: #fff; display: flex; align-items: center; justify-content: flex-end; padding: 0 3px; }
.st-combo + svg { margin-left: 4px; }
.st-model { justify-content: space-between; padding-left: 2px; color: #777; }
.st-check { width: 9px; height: 10px; border: 1px solid #666; background: #fff; margin-left: 151px; }
.st-pd { width: 56px; padding-left: 2px; white-space: nowrap; }
.grip { margin-left: auto; width: 7px; height: 7px; background: radial-gradient(circle, #aaa 40%, transparent 45%) 0 0 / 3px 3px; }
```
